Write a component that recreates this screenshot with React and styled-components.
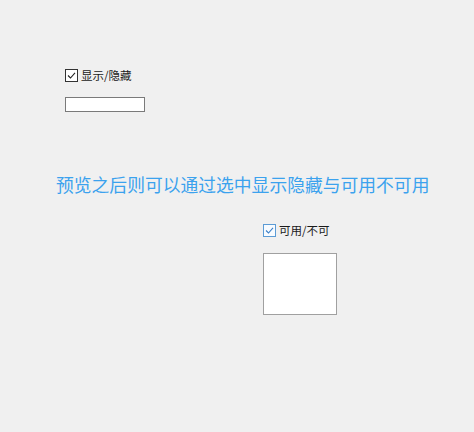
import React, { useState } from 'react';
import styled, { createGlobalStyle } from 'styled-components';

const GlobalStyle = createGlobalStyle`
  html, body {
    margin: 0;
    padding: 0;
    background: #f0f0f0;
  }
  body {
    font-family: "Noto Sans CJK SC", "Noto Sans", sans-serif;
    color: #000;
  }
`;

const Page = styled.div`
  width: 474px;
  height: 432px;
  box-sizing: border-box;
  padding: 66px 0 0 65px;
  display: flex;
  flex-direction: column;
`;

const CheckRow = styled.label`
  display: flex;
  align-items: center;
  gap: 3px;
  height: 18px;
  font-size: 11.5px;
  line-height: 18px;
  color: #1a1a1a;
  margin-left: ${(props) => props.indent || 0}px;
  cursor: default;
`;

const Box = styled.span`
  width: 13px;
  height: 13px;
  box-sizing: border-box;
  border: 1px solid ${(props) => (props.hot ? '#5b9bd5' : '#333')};
  background: ${(props) => (props.hot ? '#f7fbff' : '#fff')};
  display: flex;
  align-items: center;
  justify-content: center;
`;

const TextInput = styled.input`
  width: 80px;
  height: 15px;
  box-sizing: border-box;
  margin: 13px 0 0 0;
  padding: 0 2px;
  border: 1px solid #7a7a7a;
  background: #fff;
  font-size: 12px;
  outline: none;
`;

const Banner = styled.div`
  margin: 60px 0 0 -9px;
  font-size: 17.8px;
  line-height: 24px;
  color: #3ba2ee;
  white-space: nowrap;
`;

const Panel = styled.div`
  margin-left: 198px;
  width: 74px;
  height: 62px;
  box-sizing: border-box;
  margin-top: 14px;
  border: 1px solid #a0a0a0;
  background: #fff;
`;

const Check = ({ color }) => (
  <svg width="9" height="9" viewBox="0 0 9 9">
    <path d="M1 4.5 L3.5 7 L8 1.8" fill="none" stroke={color} strokeWidth="1.1" />
  </svg>
);

const CheckBox = ({ label, checked, onChange, hot, indent, style }) => (
  <CheckRow indent={indent} style={style} onClick={onChange}>
    <Box hot={hot}>{checked && <Check color={hot ? '#3a7fc8' : '#222'} />}</Box>
    <span>{label}</span>
  </CheckRow>
);

export default function App() {
  const [show, setShow] = useState(true);
  const [enabled, setEnabled] = useState(true);

  return (
    <>
      <GlobalStyle />
      <Page>
        <CheckBox label="显示/隐藏" checked={show} onChange={() => setShow(!show)} />
        <TextInput style={{ visibility: show ? 'visible' : 'hidden' }} />
        <Banner>预览之后则可以通过选中显示隐藏与可用不可用</Banner>
        <CheckBox
          label="可用/不可"
          checked={enabled}
          hot
          indent={198}
          style={{ marginTop: 25 }}
          onChange={() => setEnabled(!enabled)}
        />
        <Panel />
      </Page>
    </>
  );
}
